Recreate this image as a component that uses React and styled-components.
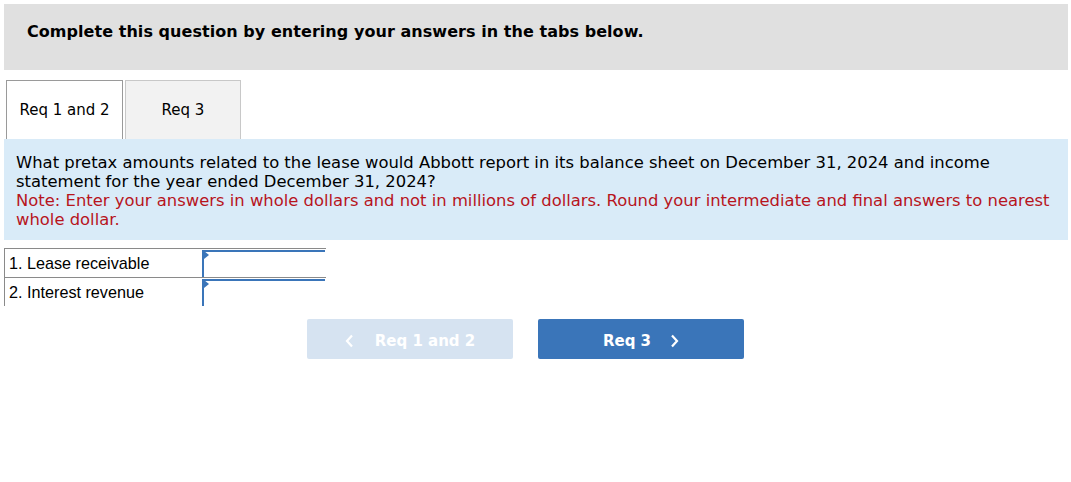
import React from "react";
import styled, { createGlobalStyle } from "styled-components";

const Global = createGlobalStyle`
  html, body { margin: 0; padding: 0; background: #fff; }
  body { font-family: "DejaVu Sans", Verdana, sans-serif; color: #000; }
`;

const Page = styled.div`
  padding: 4px 3px 0 4px;
  width: 1064px;
`;

const Header = styled.div`
  background: #e0e0e0;
  height: 66px;
  box-sizing: border-box;
  padding: 18px 0 0 23px;
  font-weight: bold;
  font-size: 16px;
  line-height: 19px;
  letter-spacing: 0.05px;
`;

const Tabs = styled.div`
  display: flex;
  gap: 2px;
  margin-top: 10px;
  padding-left: 2px;
`;

const Tab = styled.div`
  height: 59px;
  box-sizing: border-box;
  display: flex;
  align-items: center;
  justify-content: center;
  font-size: 15px;
  width: ${(p) => (p.$active ? "117px" : "116px")};
  background: ${(p) => (p.$active ? "#fff" : "#f2f2f2")};
  border: 1px solid ${(p) => (p.$active ? "#9a9a9a" : "#c8c8c8")};
  border-bottom: none;
  padding-bottom: 1px;
`;

const Panel = styled.div`
  background: #d9ebf8;
  padding: 14px 12px 11px 12px;
  font-size: 16.4px;
  line-height: 19px;
`;

const Note = styled.div`
  color: #b7151d;
`;

const Table = styled.div`
  margin-top: 8px;
  display: grid;
  grid-template-columns: 198px 124px;
  width: 322px;
`;

const Label = styled.div`
  height: 29px;
  box-sizing: border-box;
  border-top: 1px solid #8a8a8a;
  border-left: 1px solid #8a8a8a;
  padding-left: 4px;
  display: flex;
  align-items: center;
  font-family: "Liberation Sans", Arial, sans-serif;
  font-size: 16.2px;
`;

const InputCell = styled.div`
  position: relative;
  height: 29px;
  box-sizing: border-box;
  border-top: 1px solid #8a8a8a;
  &::before {
    content: "";
    position: absolute;
    top: 1px;
    left: 0;
    right: 1px;
    height: 2px;
    background: #3a75b9;
  }
  &::after {
    content: "";
    position: absolute;
    top: 1px;
    bottom: 0;
    left: 0;
    width: 2px;
    background: #3a75b9;
  }
`;

const Flag = styled.span`
  position: absolute;
  top: 2px;
  left: 2px;
  width: 0;
  height: 0;
  border-top: 4px solid transparent;
  border-bottom: 4px solid transparent;
  border-left: 5px solid #3a75b9;
`;

const Nav = styled.div`
  display: flex;
  gap: 25px;
  margin-top: 13px;
  padding-left: 303px;
`;

const NavButton = styled.button`
  width: 206px;
  height: 40px;
  border: none;
  border-radius: 2px;
  background: ${(p) => (p.disabled ? "#d6e3f1" : "#3a75b9")};
  color: #fff;
  font-family: "DejaVu Sans", Verdana, sans-serif;
  font-weight: bold;
  font-size: 15px;
  display: flex;
  align-items: center;
  justify-content: center;
  gap: ${(p) => (p.disabled ? "21px" : "19px")};
  cursor: pointer;
  padding: 3px 0 0 0;
  box-sizing: border-box;
`;

const Chevron = ({ dir }) => (
  <svg width="9" height="14" viewBox="0 0 9 14" fill="none">
    <path
      d={dir === "left" ? "M7 1.5 L2 7 L7 12.5" : "M2 1.5 L7 7 L2 12.5"}
      stroke="#fff"
      strokeWidth="2.2"
    />
  </svg>
);

export default function App() {
  return (
    <>
      <Global />
      <Page>
        <Header>Complete this question by entering your answers in the tabs below.</Header>
        <Tabs>
          <Tab $active>Req 1 and 2</Tab>
          <Tab>Req 3</Tab>
        </Tabs>
        <Panel>
          <div>
            What pretax amounts related to the lease would Abbott report in its balance sheet on December 31, 2024 and income
            <br />
            statement for the year ended December 31, 2024?
          </div>
          <Note>
            Note: Enter your answers in whole dollars and not in millions of dollars. Round your intermediate and final answers to nearest
            <br />
            whole dollar.
          </Note>
        </Panel>
        <Table>
          <Label>1. Lease receivable</Label>
          <InputCell><Flag /></InputCell>
          <Label>2. Interest revenue</Label>
          <InputCell><Flag /></InputCell>
        </Table>
        <Nav>
          <NavButton disabled>
            <Chevron dir="left" />
            Req 1 and 2
          </NavButton>
          <NavButton>
            Req 3
            <Chevron dir="right" />
          </NavButton>
        </Nav>
      </Page>
    </>
  );
}
